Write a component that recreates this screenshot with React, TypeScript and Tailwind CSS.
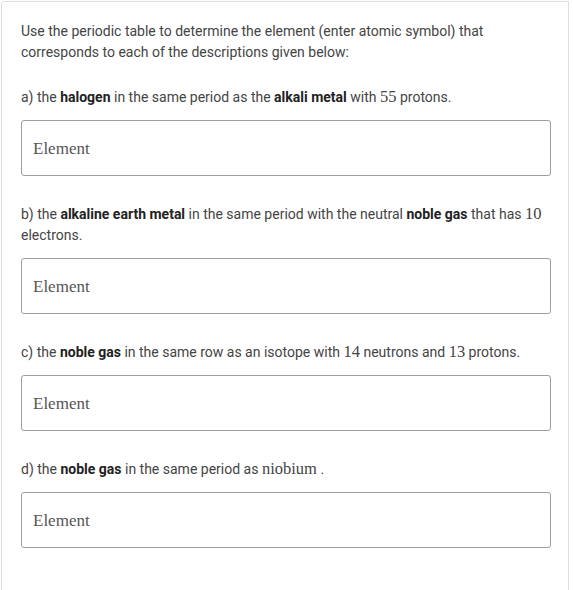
import React from 'react';

const serif = "font-['Liberation_Serif','Times_New_Roman',serif]";

function Num({ children }: { children: React.ReactNode }) {
  return <span className={`${serif} text-[16.5px] leading-[20px]`}>{children}</span>;
}

function ElementInput() {
  return (
    <div className="mt-[12px] h-[56px] w-[530px] rounded-[3px] border border-[#9e9e9e] bg-white flex items-center px-[11px]">
      <input
        type="text"
        placeholder="Element"
        className={`${serif} w-full bg-transparent text-[17px] text-[#333] placeholder:text-[#555] outline-none`}
      />
    </div>
  );
}

export default function App() {
  return (
    <div className="min-h-[590px] bg-white pl-px pt-px font-['Roboto','Liberation_Sans',sans-serif] text-[14px] leading-[21px] text-[#444]">
      <div className="w-[568px] min-h-[600px] rounded-tl-[3px] border border-[#dedede] pl-[19px] pr-[17px] pt-[19px]">
        <p>
          Use the periodic table to determine the element (enter atomic symbol) that corresponds to each of the
          descriptions given below:
        </p>

        <p className="mt-[24px]">
          a) the <b className="font-bold text-[#222]">halogen</b> in the same period as the{' '}
          <b className="font-bold text-[#222]">alkali metal</b> with <Num>55</Num> protons.
        </p>
        <ElementInput />

        <p className="mt-[28px] pr-[4px]">
          b) the <b className="font-bold text-[#222]">alkaline earth metal</b> in the same period with the neutral{' '}
          <b className="font-bold text-[#222]">noble gas</b> that has <Num>10</Num> electrons.
        </p>
        <ElementInput />

        <p className="mt-[28px]">
          c) the <b className="font-bold text-[#222]">noble gas</b> in the same row as an isotope with <Num>14</Num>{' '}
          neutrons and <Num>13</Num> protons.
        </p>
        <ElementInput />

        <p className="mt-[28px]">
          d) the <b className="font-bold text-[#222]">noble gas</b> in the same period as <Num>niobium</Num> .
        </p>
        <ElementInput />
      </div>
    </div>
  );
}
